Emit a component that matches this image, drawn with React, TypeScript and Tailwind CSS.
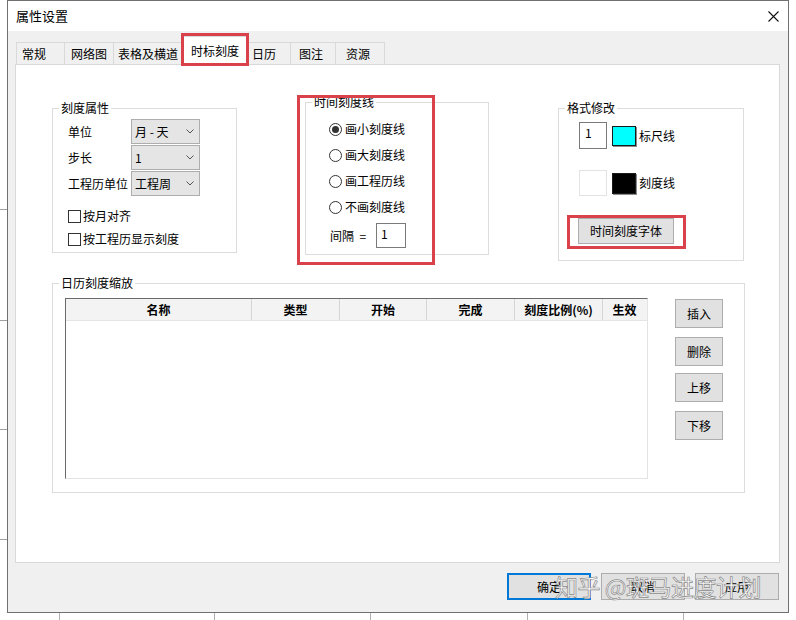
import React from "react";

const tabs = [
  { label: "常规", w: "w-[48px]", pl: "pl-[5px]" },
  { label: "网络图", w: "w-[49px]", pl: "pl-[6px]" },
  { label: "表格及横道", w: "w-[69px]", pl: "pl-[4px]" },
  { label: "时标刻度", w: "w-[66px]", pl: "pl-[8px]", active: true },
  { label: "日历", w: "w-[42px]", pl: "pl-[3px]" },
  { label: "图注", w: "w-[45px]", pl: "pl-[8px]" },
  { label: "资源", w: "w-[50px]", pl: "pl-[10px]", last: true },
];

const Legend = ({ text }: { text: string }) => (
  <span className="absolute -top-[9px] left-[6px] bg-white px-[2px] leading-[16px]">
    {text}
  </span>
);

const Chevron = () => (
  <svg width="8" height="5" viewBox="0 0 8 5" className="shrink-0">
    <path d="M0.5 0.5 L4 4 L7.5 0.5" fill="none" stroke="#555" strokeWidth="1" />
  </svg>
);

const Combo = ({ value }: { value: string }) => (
  <div className="w-[69px] h-[25px] bg-[#e5e5e5] border border-[#adadad] flex items-center justify-between pl-[3px] pr-[5px]">
    <span>{value}</span>
    <Chevron />
  </div>
);

const Check = ({ label }: { label: string }) => (
  <div className="flex items-center gap-[2px] h-[16px]">
    <div className="w-[13px] h-[13px] border border-[#333] bg-white" />
    <span>{label}</span>
  </div>
);

const Radio = ({ label, on }: { label: string; on?: boolean }) => (
  <div className="h-[26px] flex items-center gap-[3px]">
    <div className="w-[13px] h-[13px] rounded-full border border-[#333] bg-white flex items-center justify-center">
      {on && <div className="w-[7px] h-[7px] rounded-full bg-[#333]" />}
    </div>
    <span>{label}</span>
  </div>
);

const cols = [
  { t: "名称", w: "w-[186px]" },
  { t: "类型", w: "w-[88px]" },
  { t: "开始", w: "w-[87px]" },
  { t: "完成", w: "w-[88px]" },
  { t: "刻度比例(%)", w: "w-[88px]" },
];

const SideBtn = ({ label, mt }: { label: string; mt: string }) => (
  <button className={`w-[48px] h-[29px] bg-[#e1e1e1] border border-[#adadad] ${mt}`}>
    {label}
  </button>
);

export default function App() {
  return (
    <div className="w-[796px] h-[620px] bg-white relative overflow-hidden text-[12px] text-black font-['Noto_Sans_CJK_SC','Noto_Sans',sans-serif]">
      {/* background sheet ticks */}
      <div className="absolute left-0 top-[209px] w-[7px] h-px bg-[#a0a0a0]" />
      <div className="absolute left-0 top-[320px] w-[7px] h-px bg-[#a0a0a0]" />
      <div className="absolute left-0 top-[429px] w-[7px] h-px bg-[#a0a0a0]" />
      <div className="absolute left-0 top-[539px] w-[7px] h-px bg-[#a0a0a0]" />
      <div className="absolute left-[59px] top-[613px] w-px h-[7px] bg-[#b0b0b0]" />
      <div className="absolute left-[214px] top-[613px] w-px h-[7px] bg-[#b0b0b0]" />
      <div className="absolute left-[370px] top-[613px] w-px h-[7px] bg-[#b0b0b0]" />
      <div className="absolute left-[527px] top-[613px] w-px h-[7px] bg-[#b0b0b0]" />
      <div className="absolute left-[683px] top-[613px] w-px h-[7px] bg-[#b0b0b0]" />

      {/* dialog */}
      <div className="ml-[7px] w-[782px] h-[613px] border border-[#707070] flex flex-col">
        <div className="h-[30px] bg-white flex items-center justify-between pl-[8px] pr-[9px] shrink-0">
          <span className="text-[13px]">属性设置</span>
          <svg width="11" height="11" viewBox="0 0 11 11">
            <path d="M0.5 0.5 L10.5 10.5 M10.5 0.5 L0.5 10.5" stroke="#111" strokeWidth="1.1" />
          </svg>
        </div>

        <div className="flex-1 bg-[#f0f0f0] pl-[7px] pr-[8px] flex flex-col">
          {/* tabs */}
          <div className="h-[33px] flex items-end pl-[1px]">
            {tabs.map((t) =>
              t.active ? (
                <div
                  key={t.label}
                  className={`${t.w} ${t.pl} h-[29px] -mb-px relative z-10 bg-white border-t border-x border-[#d9d9d9] flex items-center`}
                >
                  {t.label}
                </div>
              ) : (
                <div
                  key={t.label}
                  className={`${t.w} ${t.pl} h-[22px] border-t border-l border-[#d9d9d9] ${t.last ? "border-r" : ""} flex items-center`}
                >
                  {t.label}
                </div>
              )
            )}
          </div>

          {/* panel */}
          <div className="h-[499px] bg-white border border-[#d9d9d9] pl-[36px]">
            <div className="flex items-start">
              {/* 刻度属性 */}
              <div className="relative mt-[43px] w-[185px] h-[145px] border border-[#dcdcdc]">
                <Legend text="刻度属性" />
                <div className="pl-[15px] pt-[10px] flex flex-col gap-[1px]">
                  <div className="flex items-center">
                    <span className="w-[63px]">单位</span>
                    <Combo value="月 - 天" />
                  </div>
                  <div className="flex items-center">
                    <span className="w-[63px]">步长</span>
                    <Combo value="1" />
                  </div>
                  <div className="flex items-center">
                    <span className="w-[63px]">工程历单位</span>
                    <Combo value="工程周" />
                  </div>
                  <div className="mt-[11px] flex flex-col gap-[7px]">
                    <Check label="按月对齐" />
                    <Check label="按工程历显示刻度" />
                  </div>
                </div>
              </div>

              {/* 时间刻度线 */}
              <div className="relative ml-[68px] mt-[37px] w-[184px] h-[153px] border border-[#dcdcdc]">
                <Legend text="时间刻度线" />
                <div className="pl-[23px] pt-[13px]">
                  <Radio label="画小刻度线" on />
                  <Radio label="画大刻度线" />
                  <Radio label="画工程历线" />
                  <Radio label="不画刻度线" />
                  <div className="mt-[3px] flex items-center">
                    <span className="w-[47px] pl-[1px] whitespace-pre">间隔  =</span>
                    <div className="w-[30px] h-[25px] border border-[#7a7a7a] bg-white pl-[4px] leading-[20px]">
                      1
                    </div>
                  </div>
                </div>
              </div>

              {/* 格式修改 */}
              <div className="relative ml-[69px] mt-[43px] w-[186px] h-[153px] border border-[#dcdcdc]">
                <Legend text="格式修改" />
                <div className="pl-[20px] pt-[13px]">
                  <div className="flex items-center">
                    <div className="w-[28px] h-[27px] border border-[#7a7a7a] bg-white pl-[5px] leading-[20px]">
                      1
                    </div>
                    <div className="ml-[5px] w-[24px] h-[20px] bg-[#00ffff] border border-[#1a1a1a] shadow-[1px_1px_0_#8a8a8a]" />
                    <span className="ml-[3px]">标尺线</span>
                  </div>
                  <div className="mt-[21px] flex items-center">
                    <div className="w-[28px] h-[26px] border border-[#e3e3e3] bg-white" />
                    <div className="ml-[5px] w-[24px] h-[21px] bg-black border border-[#1a1a1a] shadow-[1px_1px_0_#8a8a8a]" />
                    <span className="ml-[3px]">刻度线</span>
                  </div>
                  <button className="mt-[22px] -ml-px w-[96px] h-[26px] bg-[#e1e1e1] border border-[#adadad]">
                    时间刻度字体
                  </button>
                </div>
              </div>
            </div>

            {/* 日历刻度缩放 */}
            <div className="relative mt-[22px] w-[693px] h-[210px] border border-[#dcdcdc]">
              <Legend text="日历刻度缩放" />
              <div className="flex items-start pl-[12px] pt-[14px]">
                <div className="w-[583px] h-[181px] bg-white border-t border-l border-[#6a6a6a] border-r border-b border-r-[#e3e3e3] border-b-[#e3e3e3]">
                  <div className="flex h-[22px] bg-[#f3f3f3] border-b border-[#e5e5e5] font-bold">
                    {cols.map((c) => (
                      <div
                        key={c.t}
                        className={`${c.w} border-r border-[#d5d5d5] flex items-center justify-center`}
                      >
                        {c.t}
                      </div>
                    ))}
                    <div className="flex-1 flex items-center justify-center pr-[1px]">生效</div>
                  </div>
                </div>
                <div className="ml-[27px] flex flex-col">
                  <SideBtn label="插入" mt="mt-[1px]" />
                  <SideBtn label="删除" mt="mt-[9px]" />
                  <SideBtn label="上移" mt="mt-[7px]" />
                  <SideBtn label="下移" mt="mt-[9px]" />
                </div>
              </div>
            </div>
          </div>

          {/* dialog buttons */}
          <div className="mt-[10px] flex justify-end gap-[10px] pr-[1px]">
            <button className="w-[84px] h-[27px] bg-[#e1e1e1] border-2 border-[#0078d7]">确定</button>
            <button className="w-[84px] h-[27px] bg-[#e1e1e1] border border-[#adadad]">取消</button>
            <button className="w-[84px] h-[27px] bg-[#e1e1e1] border border-[#adadad]">应用</button>
          </div>
        </div>
      </div>

      {/* annotation boxes */}
      <div className="absolute left-[181px] top-[33px] w-[68px] h-[33px] border-[3px] border-[#d9424a] z-20" />
      <div className="absolute left-[297px] top-[95px] w-[138px] h-[170px] border-[3px] border-[#d9424a]" />
      <div className="absolute left-[567px] top-[215px] w-[119px] h-[34px] border-[3px] border-[#d9424a]" />

      {/* watermark */}
      <div className="absolute left-[555px] top-[571px] text-[23px] leading-[30px] tracking-[-0.5px] text-white [-webkit-text-stroke:0.7px_#8a8a8a] whitespace-nowrap">
        知乎 @斑马进度计划
      </div>
    </div>
  );
}
